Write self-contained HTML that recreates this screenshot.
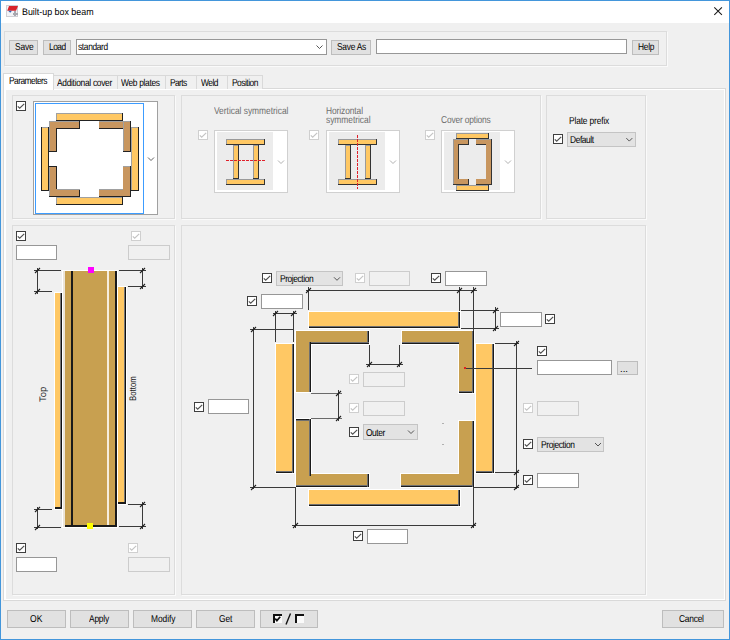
<!DOCTYPE html>
<html><head><meta charset="utf-8"><style>
html,body{margin:0;padding:0;width:730px;height:640px;overflow:hidden;background:#f0f0f0}
body{position:relative;font-family:"Liberation Sans",sans-serif}
#root>div{position:absolute;box-sizing:border-box}
.t{position:absolute;text-rendering:geometricPrecision}
svg.ov{position:absolute;left:0;top:0}
</style></head><body><div id="root">
<div style="left:0px;top:0px;width:730px;height:640px;background:#f0f0f0"></div>
<div style="left:1px;top:1px;width:728px;height:22px;background:#fff"></div>
<div style="left:0px;top:0px;width:730px;height:1px;background:#4396db"></div>
<div style="left:0px;top:639px;width:730px;height:1px;background:#4396db"></div>
<div style="left:0px;top:0px;width:1px;height:640px;background:#4396db"></div>
<div style="left:729px;top:0px;width:1px;height:640px;background:#4396db"></div>
<div class="t" style="left:22.20px;top:8.28px;font-size:9.5px;line-height:9.5px;color:#000;letter-spacing:0.000px;transform:scaleX(0.935);transform-origin:0 0;white-space:pre">Built-up box beam</div>
<div style="left:4px;top:31px;width:663px;height:35px;border:1px solid #dcdcdc;box-shadow:1px 1px 0 #fafafa"></div>
<div style="left:9px;top:40px;width:29px;height:15px;border:1px solid #bdbdbd;background:#e1e1e1"></div>
<div class="t" style="left:14.60px;top:43.20px;font-size:10px;line-height:10px;color:#000;letter-spacing:-0.219px;transform:scaleX(0.840);transform-origin:0 0;white-space:pre">Save</div>
<div style="left:43px;top:40px;width:28px;height:15px;border:1px solid #bdbdbd;background:#e1e1e1"></div>
<div class="t" style="left:48.80px;top:43.20px;font-size:10px;line-height:10px;color:#000;letter-spacing:-0.614px;transform:scaleX(0.840);transform-origin:0 0;white-space:pre">Load</div>
<div style="left:76px;top:39px;width:251px;height:16px;border:1px solid #979797;background:#fff"></div>
<div class="t" style="left:77.50px;top:43.00px;font-size:10px;line-height:10px;color:#000;letter-spacing:-0.421px;transform:scaleX(0.840);transform-origin:0 0;white-space:pre">standard</div>
<div style="left:331px;top:40px;width:40px;height:15px;border:1px solid #bdbdbd;background:#e1e1e1"></div>
<div class="t" style="left:336.70px;top:43.20px;font-size:10px;line-height:10px;color:#000;letter-spacing:-0.303px;transform:scaleX(0.840);transform-origin:0 0;white-space:pre">Save As</div>
<div style="left:376px;top:39px;width:251px;height:15px;border:1px solid #979797;background:#fff"></div>
<div style="left:632px;top:40px;width:27px;height:15px;border:1px solid #bdbdbd;background:#e1e1e1"></div>
<div class="t" style="left:637.80px;top:43.20px;font-size:10px;line-height:10px;color:#000;letter-spacing:-0.319px;transform:scaleX(0.840);transform-origin:0 0;white-space:pre">Help</div>
<div style="left:3px;top:88px;width:723px;height:513px;border:1px solid #d9d9d9;background:#fff"></div>
<div style="left:6px;top:90px;width:718px;height:509px;background:#f0f0f0"></div>
<div style="left:53px;top:75px;width:65px;height:14px;border:1px solid #d9d9d9;border-bottom:none;background:#f0f0f0"></div>
<div class="t" style="left:57.00px;top:79.00px;font-size:10px;line-height:10px;color:#000;letter-spacing:-0.359px;transform:scaleX(0.840);transform-origin:0 0;white-space:pre">Additional cover</div>
<div style="left:117px;top:75px;width:49px;height:14px;border:1px solid #d9d9d9;border-bottom:none;background:#f0f0f0"></div>
<div class="t" style="left:121.40px;top:79.00px;font-size:10px;line-height:10px;color:#000;letter-spacing:-0.375px;transform:scaleX(0.840);transform-origin:0 0;white-space:pre">Web plates</div>
<div style="left:165px;top:75px;width:32px;height:14px;border:1px solid #d9d9d9;border-bottom:none;background:#f0f0f0"></div>
<div class="t" style="left:169.60px;top:79.00px;font-size:10px;line-height:10px;color:#000;letter-spacing:-0.736px;transform:scaleX(0.840);transform-origin:0 0;white-space:pre">Parts</div>
<div style="left:196px;top:75px;width:32px;height:14px;border:1px solid #d9d9d9;border-bottom:none;background:#f0f0f0"></div>
<div class="t" style="left:201.00px;top:79.00px;font-size:10px;line-height:10px;color:#000;letter-spacing:-0.589px;transform:scaleX(0.840);transform-origin:0 0;white-space:pre">Weld</div>
<div style="left:227px;top:75px;width:36px;height:14px;border:1px solid #d9d9d9;border-bottom:none;background:#f0f0f0"></div>
<div class="t" style="left:231.60px;top:79.00px;font-size:10px;line-height:10px;color:#000;letter-spacing:-0.596px;transform:scaleX(0.840);transform-origin:0 0;white-space:pre">Position</div>
<div style="left:3px;top:73px;width:51px;height:17px;border:1px solid #d9d9d9;border-bottom:none;background:#fff"></div>
<div class="t" style="left:8.80px;top:77.30px;font-size:10px;line-height:10px;color:#000;letter-spacing:-0.652px;transform:scaleX(0.840);transform-origin:0 0;white-space:pre">Parameters</div>
<div style="left:12px;top:95px;width:163px;height:124px;border:1px solid #dcdcdc;box-shadow:1px 1px 0 #fafafa"></div>
<div style="left:181px;top:95px;width:360px;height:124px;border:1px solid #dcdcdc;box-shadow:1px 1px 0 #fafafa"></div>
<div style="left:546px;top:95px;width:100px;height:124px;border:1px solid #dcdcdc;box-shadow:1px 1px 0 #fafafa"></div>
<div style="left:12px;top:225px;width:163px;height:370px;border:1px solid #dcdcdc;box-shadow:1px 1px 0 #fafafa"></div>
<div style="left:181px;top:225px;width:465px;height:370px;border:1px solid #dcdcdc;box-shadow:1px 1px 0 #fafafa"></div>
<div style="left:16px;top:101px;width:10px;height:10px;border:1px solid #3f3f3f;background:#fff"><svg width="8" height="8" style="position:absolute;left:0;top:0"><path d="M0.8 4.3 L2.7 6.2 L7.2 1.9" fill="none" stroke="#505050" stroke-width="1.2"/></svg></div>
<div style="left:33px;top:101px;width:125px;height:114px;border:1px solid #a0a0a0;background:#fff"></div>
<div style="left:35px;top:103px;width:109px;height:111px;border:1px solid #3c9cff;background:#fff"></div>
<div class="t" style="left:213.90px;top:107.10px;font-size:10px;line-height:10px;color:#6d6d6d;letter-spacing:-0.017px;transform:scaleX(0.840);transform-origin:0 0;white-space:pre">Vertical symmetrical</div>
<div class="t" style="left:325.70px;top:106.70px;font-size:10px;line-height:10px;color:#6d6d6d;letter-spacing:-0.106px;transform:scaleX(0.840);transform-origin:0 0;white-space:pre">Horizontal</div>
<div class="t" style="left:325.70px;top:116.00px;font-size:10px;line-height:10px;color:#6d6d6d;letter-spacing:-0.032px;transform:scaleX(0.840);transform-origin:0 0;white-space:pre">symmetrical</div>
<div class="t" style="left:440.50px;top:115.70px;font-size:10px;line-height:10px;color:#6d6d6d;letter-spacing:-0.201px;transform:scaleX(0.840);transform-origin:0 0;white-space:pre">Cover options</div>
<div style="left:198px;top:130px;width:10px;height:10px;border:1px solid #cfcfcf;background:#fff"><svg width="8" height="8" style="position:absolute;left:0;top:0"><path d="M0.8 4.3 L2.7 6.2 L7.2 1.9" fill="none" stroke="#c4c4c4" stroke-width="1.2"/></svg></div>
<div style="left:309px;top:130px;width:10px;height:10px;border:1px solid #cfcfcf;background:#fff"><svg width="8" height="8" style="position:absolute;left:0;top:0"><path d="M0.8 4.3 L2.7 6.2 L7.2 1.9" fill="none" stroke="#c4c4c4" stroke-width="1.2"/></svg></div>
<div style="left:425px;top:130px;width:10px;height:10px;border:1px solid #cfcfcf;background:#fff"><svg width="8" height="8" style="position:absolute;left:0;top:0"><path d="M0.8 4.3 L2.7 6.2 L7.2 1.9" fill="none" stroke="#c4c4c4" stroke-width="1.2"/></svg></div>
<div style="left:214px;top:130px;width:74px;height:63px;border:1px solid #d0d0d0;background:#fff"></div>
<div style="left:217px;top:132px;width:56px;height:58px;background:#ececec"></div>
<div style="left:326px;top:130px;width:74px;height:63px;border:1px solid #d0d0d0;background:#fff"></div>
<div style="left:329px;top:132px;width:56px;height:58px;background:#ececec"></div>
<div style="left:441px;top:130px;width:74px;height:63px;border:1px solid #d0d0d0;background:#fff"></div>
<div style="left:444px;top:132px;width:56px;height:58px;background:#ececec"></div>
<div class="t" style="left:568.80px;top:117.20px;font-size:10px;line-height:10px;color:#000;letter-spacing:-0.184px;transform:scaleX(0.840);transform-origin:0 0;white-space:pre">Plate prefix</div>
<div style="left:553px;top:134px;width:10px;height:10px;border:1px solid #3f3f3f;background:#fff"><svg width="8" height="8" style="position:absolute;left:0;top:0"><path d="M0.8 4.3 L2.7 6.2 L7.2 1.9" fill="none" stroke="#505050" stroke-width="1.2"/></svg></div>
<div style="left:567px;top:132px;width:69px;height:15px;border:1px solid #c4c4c4;background:#e3e3e3"></div>
<div class="t" style="left:569.90px;top:136.20px;font-size:10px;line-height:10px;color:#000;letter-spacing:-0.502px;transform:scaleX(0.840);transform-origin:0 0;white-space:pre">Default</div>
<div style="left:16px;top:231px;width:10px;height:10px;border:1px solid #3f3f3f;background:#fff"><svg width="8" height="8" style="position:absolute;left:0;top:0"><path d="M0.8 4.3 L2.7 6.2 L7.2 1.9" fill="none" stroke="#505050" stroke-width="1.2"/></svg></div>
<div style="left:16px;top:245px;width:41px;height:15px;border:1px solid #979797;background:#fff"></div>
<div style="left:131px;top:231px;width:10px;height:10px;border:1px solid #cfcfcf;background:#fff"><svg width="8" height="8" style="position:absolute;left:0;top:0"><path d="M0.8 4.3 L2.7 6.2 L7.2 1.9" fill="none" stroke="#c4c4c4" stroke-width="1.2"/></svg></div>
<div style="left:128px;top:245px;width:42px;height:15px;border:1px solid #cccccc;background:#f0f0f0"></div>
<div style="left:16px;top:543px;width:10px;height:10px;border:1px solid #3f3f3f;background:#fff"><svg width="8" height="8" style="position:absolute;left:0;top:0"><path d="M0.8 4.3 L2.7 6.2 L7.2 1.9" fill="none" stroke="#505050" stroke-width="1.2"/></svg></div>
<div style="left:16px;top:557px;width:41px;height:15px;border:1px solid #979797;background:#fff"></div>
<div style="left:128px;top:543px;width:10px;height:10px;border:1px solid #cfcfcf;background:#fff"><svg width="8" height="8" style="position:absolute;left:0;top:0"><path d="M0.8 4.3 L2.7 6.2 L7.2 1.9" fill="none" stroke="#c4c4c4" stroke-width="1.2"/></svg></div>
<div style="left:128px;top:557px;width:42px;height:15px;border:1px solid #cccccc;background:#f0f0f0"></div>
<div class="t" style="left:38.68px;top:401.90px;font-size:9.5px;line-height:9.5px;color:#222;transform:rotate(-90deg) scaleX(0.994);transform-origin:0 0;white-space:pre">Top</div>
<div class="t" style="left:129.38px;top:400.60px;font-size:9.5px;line-height:9.5px;color:#222;transform:rotate(-90deg) scaleX(0.827);transform-origin:0 0;white-space:pre">Bottom</div>
<div style="left:262px;top:273px;width:10px;height:10px;border:1px solid #3f3f3f;background:#fff"><svg width="8" height="8" style="position:absolute;left:0;top:0"><path d="M0.8 4.3 L2.7 6.2 L7.2 1.9" fill="none" stroke="#505050" stroke-width="1.2"/></svg></div>
<div style="left:276px;top:271px;width:67px;height:15px;border:1px solid #c4c4c4;background:#e3e3e3"></div>
<div class="t" style="left:279.70px;top:275.20px;font-size:10px;line-height:10px;color:#000;letter-spacing:-0.487px;transform:scaleX(0.840);transform-origin:0 0;white-space:pre">Projection</div>
<div style="left:355px;top:273px;width:10px;height:10px;border:1px solid #cfcfcf;background:#fff"><svg width="8" height="8" style="position:absolute;left:0;top:0"><path d="M0.8 4.3 L2.7 6.2 L7.2 1.9" fill="none" stroke="#c4c4c4" stroke-width="1.2"/></svg></div>
<div style="left:369px;top:271px;width:41px;height:15px;border:1px solid #cccccc;background:#f0f0f0"></div>
<div style="left:431px;top:273px;width:10px;height:10px;border:1px solid #3f3f3f;background:#fff"><svg width="8" height="8" style="position:absolute;left:0;top:0"><path d="M0.8 4.3 L2.7 6.2 L7.2 1.9" fill="none" stroke="#505050" stroke-width="1.2"/></svg></div>
<div style="left:445px;top:271px;width:42px;height:15px;border:1px solid #979797;background:#fff"></div>
<div style="left:247px;top:296px;width:10px;height:10px;border:1px solid #3f3f3f;background:#fff"><svg width="8" height="8" style="position:absolute;left:0;top:0"><path d="M0.8 4.3 L2.7 6.2 L7.2 1.9" fill="none" stroke="#505050" stroke-width="1.2"/></svg></div>
<div style="left:261px;top:294px;width:42px;height:15px;border:1px solid #979797;background:#fff"></div>
<div style="left:500px;top:312px;width:42px;height:15px;border:1px solid #979797;background:#fff"></div>
<div style="left:545px;top:314px;width:10px;height:10px;border:1px solid #3f3f3f;background:#fff"><svg width="8" height="8" style="position:absolute;left:0;top:0"><path d="M0.8 4.3 L2.7 6.2 L7.2 1.9" fill="none" stroke="#505050" stroke-width="1.2"/></svg></div>
<div style="left:537px;top:346px;width:10px;height:10px;border:1px solid #3f3f3f;background:#fff"><svg width="8" height="8" style="position:absolute;left:0;top:0"><path d="M0.8 4.3 L2.7 6.2 L7.2 1.9" fill="none" stroke="#505050" stroke-width="1.2"/></svg></div>
<div style="left:537px;top:360px;width:75px;height:15px;border:1px solid #979797;background:#fff"></div>
<div style="left:617px;top:361px;width:21px;height:14px;border:1px solid #bdbdbd;background:#e1e1e1"></div>
<div class="t" style="left:620.00px;top:364.70px;font-size:10px;line-height:10px;color:#000;letter-spacing:0.000px;transform:scaleX(0.964);transform-origin:0 0;white-space:pre">...</div>
<div style="left:349px;top:374px;width:10px;height:10px;border:1px solid #cfcfcf;background:#fff"><svg width="8" height="8" style="position:absolute;left:0;top:0"><path d="M0.8 4.3 L2.7 6.2 L7.2 1.9" fill="none" stroke="#c4c4c4" stroke-width="1.2"/></svg></div>
<div style="left:363px;top:372px;width:42px;height:15px;border:1px solid #cccccc;background:#f0f0f0"></div>
<div style="left:349px;top:403px;width:10px;height:10px;border:1px solid #cfcfcf;background:#fff"><svg width="8" height="8" style="position:absolute;left:0;top:0"><path d="M0.8 4.3 L2.7 6.2 L7.2 1.9" fill="none" stroke="#c4c4c4" stroke-width="1.2"/></svg></div>
<div style="left:363px;top:401px;width:42px;height:15px;border:1px solid #cccccc;background:#f0f0f0"></div>
<div style="left:349px;top:427px;width:10px;height:10px;border:1px solid #3f3f3f;background:#fff"><svg width="8" height="8" style="position:absolute;left:0;top:0"><path d="M0.8 4.3 L2.7 6.2 L7.2 1.9" fill="none" stroke="#505050" stroke-width="1.2"/></svg></div>
<div style="left:363px;top:424px;width:55px;height:16px;border:1px solid #c4c4c4;background:#e3e3e3"></div>
<div class="t" style="left:365.80px;top:428.60px;font-size:10px;line-height:10px;color:#000;letter-spacing:-0.536px;transform:scaleX(0.840);transform-origin:0 0;white-space:pre">Outer</div>
<div style="left:194px;top:402px;width:10px;height:10px;border:1px solid #3f3f3f;background:#fff"><svg width="8" height="8" style="position:absolute;left:0;top:0"><path d="M0.8 4.3 L2.7 6.2 L7.2 1.9" fill="none" stroke="#505050" stroke-width="1.2"/></svg></div>
<div style="left:208px;top:399px;width:41px;height:15px;border:1px solid #979797;background:#fff"></div>
<div style="left:523px;top:403px;width:10px;height:10px;border:1px solid #cfcfcf;background:#fff"><svg width="8" height="8" style="position:absolute;left:0;top:0"><path d="M0.8 4.3 L2.7 6.2 L7.2 1.9" fill="none" stroke="#c4c4c4" stroke-width="1.2"/></svg></div>
<div style="left:537px;top:401px;width:42px;height:15px;border:1px solid #cccccc;background:#f0f0f0"></div>
<div style="left:523px;top:439px;width:10px;height:10px;border:1px solid #3f3f3f;background:#fff"><svg width="8" height="8" style="position:absolute;left:0;top:0"><path d="M0.8 4.3 L2.7 6.2 L7.2 1.9" fill="none" stroke="#505050" stroke-width="1.2"/></svg></div>
<div style="left:537px;top:437px;width:67px;height:15px;border:1px solid #c4c4c4;background:#e3e3e3"></div>
<div class="t" style="left:540.50px;top:441.20px;font-size:10px;line-height:10px;color:#000;letter-spacing:-0.447px;transform:scaleX(0.840);transform-origin:0 0;white-space:pre">Projection</div>
<div style="left:523px;top:475px;width:10px;height:10px;border:1px solid #3f3f3f;background:#fff"><svg width="8" height="8" style="position:absolute;left:0;top:0"><path d="M0.8 4.3 L2.7 6.2 L7.2 1.9" fill="none" stroke="#505050" stroke-width="1.2"/></svg></div>
<div style="left:537px;top:473px;width:42px;height:15px;border:1px solid #979797;background:#fff"></div>
<div style="left:353px;top:531px;width:10px;height:10px;border:1px solid #3f3f3f;background:#fff"><svg width="8" height="8" style="position:absolute;left:0;top:0"><path d="M0.8 4.3 L2.7 6.2 L7.2 1.9" fill="none" stroke="#505050" stroke-width="1.2"/></svg></div>
<div style="left:367px;top:529px;width:41px;height:15px;border:1px solid #979797;background:#fff"></div>
<div style="left:7px;top:610px;width:59px;height:18px;border:1px solid #bdbdbd;background:#e1e1e1"></div>
<div class="t" style="left:30.00px;top:615.20px;font-size:10px;line-height:10px;color:#000;letter-spacing:0.000px;transform:scaleX(0.854);transform-origin:0 0;white-space:pre">OK</div>
<div style="left:70px;top:610px;width:59px;height:18px;border:1px solid #bdbdbd;background:#e1e1e1"></div>
<div class="t" style="left:88.80px;top:615.20px;font-size:10px;line-height:10px;color:#000;letter-spacing:-0.268px;transform:scaleX(0.840);transform-origin:0 0;white-space:pre">Apply</div>
<div style="left:133px;top:610px;width:59px;height:18px;border:1px solid #bdbdbd;background:#e1e1e1"></div>
<div class="t" style="left:150.50px;top:615.20px;font-size:10px;line-height:10px;color:#000;letter-spacing:-0.067px;transform:scaleX(0.840);transform-origin:0 0;white-space:pre">Modify</div>
<div style="left:196px;top:610px;width:59px;height:18px;border:1px solid #bdbdbd;background:#e1e1e1"></div>
<div class="t" style="left:219.00px;top:615.20px;font-size:10px;line-height:10px;color:#000;letter-spacing:-0.074px;transform:scaleX(0.840);transform-origin:0 0;white-space:pre">Get</div>
<div style="left:260px;top:610px;width:58px;height:18px;border:1px solid #bdbdbd;background:#e1e1e1"></div>
<div style="left:662px;top:610px;width:62px;height:18px;border:1px solid #bdbdbd;background:#e1e1e1"></div>
<div class="t" style="left:679.20px;top:615.10px;font-size:10px;line-height:10px;color:#000;letter-spacing:-0.291px;transform:scaleX(0.840);transform-origin:0 0;white-space:pre">Cancel</div>
</div>
<svg class="ov" width="730" height="640" viewBox="0 0 730 640" shape-rendering="crispEdges">
<rect x="6.5" y="5.5" width="11" height="11" fill="#f2f3f7" stroke="#cfcfd4" stroke-width="1"/>
<path d="M9 6 L18 6 L16 10.8 L7.2 10.8 Z" fill="#d8232a" shape-rendering="geometricPrecision"/>
<path d="M8.2 10.8 L12 10.8 L10.2 12.8 Z" fill="#2f66b8" shape-rendering="geometricPrecision"/>
<rect x="12.5" y="13" width="5" height="1.5" fill="#a8a8b0"/><rect x="14" y="11.3" width="1.5" height="4.7" fill="#a8a8b0"/>
<path d="M714.3 7.3 L721.9 14.9 M721.9 7.3 L714.3 14.9" stroke="#1a1a1a" stroke-width="1.05" shape-rendering="geometricPrecision"/>
<path d="M316.5 45.5 L319.5 48.5 L322.5 45.5" fill="none" stroke="#444" stroke-width="0.9" shape-rendering="geometricPrecision"/>
<path d="M148 157.5 L151 160.5 L154 157.5" fill="none" stroke="#505050" stroke-width="0.9" shape-rendering="geometricPrecision"/>
<rect x="56" y="113" width="67" height="8" fill="#ffc864"/>
<rect x="56" y="113" width="67" height="1" fill="#a0a0a0"/>
<rect x="56" y="113" width="1" height="8" fill="#a0a0a0"/>
<rect x="56" y="120" width="67" height="1" fill="#222"/>
<rect x="122" y="113" width="1" height="8" fill="#222"/>
<rect x="56" y="197" width="67" height="8" fill="#ffc864"/>
<rect x="56" y="197" width="67" height="1" fill="#a0a0a0"/>
<rect x="56" y="197" width="1" height="8" fill="#a0a0a0"/>
<rect x="56" y="204" width="67" height="1" fill="#222"/>
<rect x="122" y="197" width="1" height="8" fill="#222"/>
<rect x="41" y="127" width="8" height="64" fill="#ffc864"/>
<rect x="41" y="127" width="8" height="1" fill="#a0a0a0"/>
<rect x="41" y="127" width="1" height="64" fill="#a0a0a0"/>
<rect x="41" y="190" width="8" height="1" fill="#222"/>
<rect x="48" y="127" width="1" height="64" fill="#222"/>
<rect x="41" y="127" width="1" height="64" fill="#222"/>
<rect x="131" y="127" width="8" height="64" fill="#ffc864"/>
<rect x="131" y="127" width="8" height="1" fill="#a0a0a0"/>
<rect x="131" y="127" width="1" height="64" fill="#a0a0a0"/>
<rect x="131" y="190" width="8" height="1" fill="#222"/>
<rect x="138" y="127" width="1" height="64" fill="#222"/>
<rect x="49" y="121" width="31" height="8" fill="#c8965f"/>
<rect x="49" y="121" width="8" height="31" fill="#c8965f"/>
<rect x="49" y="121" width="31" height="1" fill="#a0a0a0"/>
<rect x="49" y="121" width="1" height="31" fill="#a0a0a0"/>
<rect x="56" y="128" width="24" height="1" fill="#222"/>
<rect x="56" y="128" width="1" height="24" fill="#222"/>
<rect x="79" y="121" width="1" height="8" fill="#222"/>
<rect x="49" y="151" width="8" height="1" fill="#222"/>
<rect x="99" y="121" width="32" height="8" fill="#c8965f"/>
<rect x="123" y="121" width="8" height="31" fill="#c8965f"/>
<rect x="99" y="121" width="32" height="1" fill="#a0a0a0"/>
<rect x="123" y="121" width="1" height="31" fill="#a0a0a0"/>
<rect x="99" y="128" width="24" height="1" fill="#222"/>
<rect x="130" y="121" width="1" height="31" fill="#222"/>
<rect x="123" y="151" width="8" height="1" fill="#222"/>
<rect x="49" y="189" width="31" height="8" fill="#c8965f"/>
<rect x="49" y="166" width="8" height="31" fill="#c8965f"/>
<rect x="49" y="166" width="1" height="31" fill="#a0a0a0"/>
<rect x="49" y="166" width="8" height="1" fill="#222"/>
<rect x="56" y="166" width="1" height="23" fill="#222"/>
<rect x="49" y="196" width="31" height="1" fill="#222"/>
<rect x="79" y="189" width="1" height="8" fill="#222"/>
<rect x="57" y="189" width="23" height="1" fill="#a0a0a0"/>
<rect x="99" y="189" width="32" height="8" fill="#c8965f"/>
<rect x="123" y="166" width="8" height="31" fill="#c8965f"/>
<rect x="123" y="166" width="8" height="1" fill="#a0a0a0"/>
<rect x="99" y="189" width="24" height="1" fill="#a0a0a0"/>
<rect x="130" y="166" width="1" height="31" fill="#222"/>
<rect x="99" y="196" width="32" height="1" fill="#222"/>
<path d="M278 160.5 L281 163.5 L284 160.5" fill="none" stroke="#a8a8a8" stroke-width="0.9" shape-rendering="geometricPrecision"/>
<path d="M390 160.5 L393 163.5 L396 160.5" fill="none" stroke="#a8a8a8" stroke-width="0.9" shape-rendering="geometricPrecision"/>
<path d="M505 160.5 L508 163.5 L511 160.5" fill="none" stroke="#a8a8a8" stroke-width="0.9" shape-rendering="geometricPrecision"/>
<rect x="226" y="139" width="39" height="6" fill="#ffc864"/>
<rect x="226" y="139" width="39" height="1" fill="#9a9a9a"/>
<rect x="226" y="139" width="1" height="6" fill="#9a9a9a"/>
<rect x="226" y="144" width="39" height="1" fill="#333"/>
<rect x="264" y="139" width="1" height="6" fill="#333"/>
<rect x="226" y="179" width="39" height="6" fill="#ffc864"/>
<rect x="226" y="179" width="39" height="1" fill="#9a9a9a"/>
<rect x="226" y="179" width="1" height="6" fill="#9a9a9a"/>
<rect x="226" y="184" width="39" height="1" fill="#333"/>
<rect x="264" y="179" width="1" height="6" fill="#333"/>
<rect x="233" y="145" width="6" height="34" fill="#ffc864"/>
<rect x="233" y="145" width="6" height="1" fill="#9a9a9a"/>
<rect x="233" y="145" width="1" height="34" fill="#9a9a9a"/>
<rect x="233" y="178" width="6" height="1" fill="#333"/>
<rect x="238" y="145" width="1" height="34" fill="#333"/>
<rect x="253" y="145" width="6" height="34" fill="#ffc864"/>
<rect x="253" y="145" width="6" height="1" fill="#9a9a9a"/>
<rect x="253" y="145" width="1" height="34" fill="#9a9a9a"/>
<rect x="253" y="178" width="6" height="1" fill="#333"/>
<rect x="258" y="145" width="1" height="34" fill="#333"/>
<rect x="338" y="139" width="39" height="6" fill="#ffc864"/>
<rect x="338" y="139" width="39" height="1" fill="#9a9a9a"/>
<rect x="338" y="139" width="1" height="6" fill="#9a9a9a"/>
<rect x="338" y="144" width="39" height="1" fill="#333"/>
<rect x="376" y="139" width="1" height="6" fill="#333"/>
<rect x="338" y="179" width="39" height="6" fill="#ffc864"/>
<rect x="338" y="179" width="39" height="1" fill="#9a9a9a"/>
<rect x="338" y="179" width="1" height="6" fill="#9a9a9a"/>
<rect x="338" y="184" width="39" height="1" fill="#333"/>
<rect x="376" y="179" width="1" height="6" fill="#333"/>
<rect x="345" y="145" width="6" height="34" fill="#ffc864"/>
<rect x="345" y="145" width="6" height="1" fill="#9a9a9a"/>
<rect x="345" y="145" width="1" height="34" fill="#9a9a9a"/>
<rect x="345" y="178" width="6" height="1" fill="#333"/>
<rect x="350" y="145" width="1" height="34" fill="#333"/>
<rect x="365" y="145" width="6" height="34" fill="#ffc864"/>
<rect x="365" y="145" width="6" height="1" fill="#9a9a9a"/>
<rect x="365" y="145" width="1" height="34" fill="#9a9a9a"/>
<rect x="365" y="178" width="6" height="1" fill="#333"/>
<rect x="370" y="145" width="1" height="34" fill="#333"/>
<line x1="226" y1="160.5" x2="266" y2="160.5" stroke="#e0202a" stroke-width="1" stroke-dasharray="2.5,1.5"/>
<line x1="357.5" y1="135" x2="357.5" y2="189" stroke="#e0202a" stroke-width="1" stroke-dasharray="2.5,1.5"/>
<rect x="456" y="133" width="33" height="6" fill="#ffc864"/>
<rect x="456" y="133" width="33" height="1" fill="#9a9a9a"/>
<rect x="456" y="133" width="1" height="6" fill="#9a9a9a"/>
<rect x="456" y="138" width="33" height="1" fill="#333"/>
<rect x="488" y="133" width="1" height="6" fill="#333"/>
<rect x="456" y="185" width="33" height="6" fill="#ffc864"/>
<rect x="456" y="185" width="33" height="1" fill="#9a9a9a"/>
<rect x="456" y="185" width="1" height="6" fill="#9a9a9a"/>
<rect x="456" y="190" width="33" height="1" fill="#333"/>
<rect x="488" y="185" width="1" height="6" fill="#333"/>
<rect x="453" y="139" width="16" height="6" fill="#c8965f"/>
<rect x="453" y="139" width="6" height="46" fill="#c8965f"/>
<rect x="453" y="179" width="16" height="6" fill="#c8965f"/>
<rect x="453" y="139" width="16" height="1" fill="#9a9a9a"/>
<rect x="453" y="139" width="1" height="46" fill="#9a9a9a"/>
<rect x="468" y="139" width="1" height="6" fill="#333"/>
<rect x="458" y="144" width="11" height="1" fill="#333"/>
<rect x="458" y="145" width="1" height="34" fill="#333"/>
<rect x="453" y="184" width="16" height="1" fill="#333"/>
<rect x="468" y="179" width="1" height="6" fill="#333"/>
<rect x="476" y="139" width="16" height="6" fill="#c8965f"/>
<rect x="486" y="139" width="6" height="46" fill="#c8965f"/>
<rect x="476" y="179" width="16" height="6" fill="#c8965f"/>
<rect x="476" y="139" width="16" height="1" fill="#9a9a9a"/>
<rect x="491" y="139" width="1" height="46" fill="#333"/>
<rect x="476" y="144" width="10" height="1" fill="#333"/>
<rect x="476" y="184" width="16" height="1" fill="#333"/>
<path d="M626.3 138.1 L629.3 141.1 L632.3 138.1" fill="none" stroke="#444" stroke-width="0.9" shape-rendering="geometricPrecision"/>
<rect x="62" y="270" width="56" height="258" fill="#ffffff"/>
<rect x="63" y="271" width="2" height="256" fill="#ece5d8"/>
<rect x="65" y="271" width="52" height="256" fill="#c8a050"/>
<rect x="71" y="271" width="2" height="256" fill="#1a1a1a"/>
<rect x="107" y="271" width="2" height="256" fill="#f7eedf"/>
<rect x="115" y="271" width="2" height="256" fill="#1a1a1a"/>
<rect x="65" y="525" width="52" height="2" fill="#1a1a1a"/>
<rect x="54" y="292" width="8" height="218" fill="#ffffff"/>
<rect x="55" y="293" width="5" height="214" fill="#ffc864"/>
<rect x="60" y="293" width="1" height="216" fill="#777"/>
<rect x="61" y="293" width="1" height="216" fill="#111"/>
<rect x="55" y="507" width="7" height="2" fill="#1a1a1a"/>
<rect x="117" y="286" width="10" height="219" fill="#ffffff"/>
<rect x="118" y="287" width="6" height="215" fill="#ffc864"/>
<rect x="124" y="287" width="1" height="217" fill="#777"/>
<rect x="125" y="287" width="1" height="217" fill="#111"/>
<rect x="118" y="502" width="8" height="2" fill="#1a1a1a"/>
<rect x="88" y="267" width="6" height="6" fill="#ff00ff"/>
<rect x="87" y="523" width="6" height="6" fill="#ffff00"/>
<line x1="34" y1="270.5" x2="61" y2="270.5" stroke="#3a3a3a" stroke-width="1"/>
<line x1="37.5" y1="268" x2="37.5" y2="294" stroke="#3a3a3a" stroke-width="1"/>
<line x1="34" y1="291.5" x2="52" y2="291.5" stroke="#3a3a3a" stroke-width="1"/>
<line x1="35" y1="273" x2="40" y2="268" stroke="#222" stroke-width="1.1" shape-rendering="geometricPrecision"/>
<line x1="35" y1="294" x2="40" y2="289" stroke="#222" stroke-width="1.1" shape-rendering="geometricPrecision"/>
<line x1="34" y1="509.5" x2="52" y2="509.5" stroke="#3a3a3a" stroke-width="1"/>
<line x1="37.5" y1="507" x2="37.5" y2="529" stroke="#3a3a3a" stroke-width="1"/>
<line x1="34" y1="527.5" x2="61" y2="527.5" stroke="#3a3a3a" stroke-width="1"/>
<line x1="35" y1="512" x2="40" y2="507" stroke="#222" stroke-width="1.1" shape-rendering="geometricPrecision"/>
<line x1="35" y1="530" x2="40" y2="525" stroke="#222" stroke-width="1.1" shape-rendering="geometricPrecision"/>
<line x1="119" y1="270.5" x2="146" y2="270.5" stroke="#3a3a3a" stroke-width="1"/>
<line x1="142.5" y1="268" x2="142.5" y2="289" stroke="#3a3a3a" stroke-width="1"/>
<line x1="128" y1="286.5" x2="146" y2="286.5" stroke="#3a3a3a" stroke-width="1"/>
<line x1="140" y1="273" x2="145" y2="268" stroke="#222" stroke-width="1.1" shape-rendering="geometricPrecision"/>
<line x1="140" y1="289" x2="145" y2="284" stroke="#222" stroke-width="1.1" shape-rendering="geometricPrecision"/>
<line x1="128" y1="504.5" x2="146" y2="504.5" stroke="#3a3a3a" stroke-width="1"/>
<line x1="142.5" y1="502" x2="142.5" y2="529" stroke="#3a3a3a" stroke-width="1"/>
<line x1="119" y1="526.5" x2="146" y2="526.5" stroke="#3a3a3a" stroke-width="1"/>
<line x1="140" y1="507" x2="145" y2="502" stroke="#222" stroke-width="1.1" shape-rendering="geometricPrecision"/>
<line x1="140" y1="529" x2="145" y2="524" stroke="#222" stroke-width="1.1" shape-rendering="geometricPrecision"/>
<path d="M334 277.3 L337 280.3 L340 277.3" fill="none" stroke="#444" stroke-width="0.9" shape-rendering="geometricPrecision"/>
<path d="M408 430.5 L411 433.5 L414 430.5" fill="none" stroke="#444" stroke-width="0.9" shape-rendering="geometricPrecision"/>
<path d="M595 443.0 L598 446.0 L601 443.0" fill="none" stroke="#444" stroke-width="0.9" shape-rendering="geometricPrecision"/>
<rect x="308" y="311" width="153" height="18" fill="#ffffff"/>
<rect x="309" y="312" width="151" height="16" fill="#ffc864"/>
<rect x="309" y="326" width="151" height="2" fill="#1a1a1a"/>
<rect x="309" y="326" width="151" height="1" fill="#707070"/>
<rect x="458" y="312" width="2" height="16" fill="#1a1a1a"/>
<rect x="458" y="312" width="1" height="16" fill="#707070"/>
<rect x="308" y="489" width="153" height="18" fill="#ffffff"/>
<rect x="309" y="490" width="151" height="16" fill="#ffc864"/>
<rect x="309" y="504" width="151" height="2" fill="#1a1a1a"/>
<rect x="309" y="504" width="151" height="1" fill="#707070"/>
<rect x="458" y="490" width="2" height="16" fill="#1a1a1a"/>
<rect x="458" y="490" width="1" height="16" fill="#707070"/>
<rect x="275" y="343" width="20" height="131" fill="#ffffff"/>
<rect x="276" y="344" width="18" height="129" fill="#ffc864"/>
<rect x="276" y="471" width="18" height="2" fill="#1a1a1a"/>
<rect x="276" y="471" width="18" height="1" fill="#707070"/>
<rect x="292" y="344" width="2" height="129" fill="#1a1a1a"/>
<rect x="292" y="344" width="1" height="129" fill="#707070"/>
<rect x="475" y="343" width="20" height="131" fill="#ffffff"/>
<rect x="476" y="344" width="18" height="129" fill="#ffc864"/>
<rect x="476" y="471" width="18" height="2" fill="#1a1a1a"/>
<rect x="476" y="471" width="18" height="1" fill="#707070"/>
<rect x="492" y="344" width="2" height="129" fill="#1a1a1a"/>
<rect x="492" y="344" width="1" height="129" fill="#707070"/>
<rect x="295" y="330" width="75" height="15" fill="#ffffff"/>
<rect x="295" y="330" width="17" height="63" fill="#ffffff"/>
<rect x="296" y="331" width="73" height="13" fill="#c8a050"/>
<rect x="296" y="331" width="15" height="61" fill="#c8a050"/>
<rect x="367" y="331" width="2" height="13" fill="#1a1a1a"/>
<rect x="367" y="331" width="1" height="13" fill="#707070"/>
<rect x="309" y="342" width="60" height="2" fill="#1a1a1a"/>
<rect x="309" y="342" width="60" height="1" fill="#707070"/>
<rect x="309" y="342" width="2" height="50" fill="#1a1a1a"/>
<rect x="309" y="342" width="1" height="50" fill="#707070"/>
<rect x="401" y="330" width="74" height="15" fill="#ffffff"/>
<rect x="458" y="330" width="17" height="64" fill="#ffffff"/>
<rect x="402" y="331" width="72" height="13" fill="#c8a050"/>
<rect x="459" y="331" width="15" height="62" fill="#c8a050"/>
<rect x="402" y="342" width="57" height="2" fill="#1a1a1a"/>
<rect x="402" y="342" width="57" height="1" fill="#707070"/>
<rect x="459" y="391" width="15" height="2" fill="#1a1a1a"/>
<rect x="459" y="391" width="15" height="1" fill="#707070"/>
<rect x="472" y="331" width="2" height="62" fill="#1a1a1a"/>
<rect x="472" y="331" width="1" height="62" fill="#707070"/>
<rect x="295" y="418" width="17" height="70" fill="#ffffff"/>
<rect x="295" y="473" width="75" height="15" fill="#ffffff"/>
<rect x="296" y="419" width="15" height="68" fill="#c8a050"/>
<rect x="296" y="474" width="73" height="13" fill="#c8a050"/>
<rect x="296" y="419" width="15" height="2" fill="#1a1a1a"/>
<rect x="296" y="420" width="15" height="1" fill="#707070"/>
<rect x="309" y="419" width="2" height="57" fill="#1a1a1a"/>
<rect x="309" y="419" width="1" height="57" fill="#707070"/>
<rect x="296" y="485" width="73" height="2" fill="#1a1a1a"/>
<rect x="296" y="485" width="73" height="1" fill="#707070"/>
<rect x="367" y="474" width="2" height="13" fill="#1a1a1a"/>
<rect x="367" y="474" width="1" height="13" fill="#707070"/>
<rect x="458" y="420" width="17" height="68" fill="#ffffff"/>
<rect x="400" y="473" width="75" height="15" fill="#ffffff"/>
<rect x="459" y="421" width="15" height="66" fill="#c8a050"/>
<rect x="401" y="474" width="73" height="13" fill="#c8a050"/>
<rect x="401" y="485" width="73" height="2" fill="#1a1a1a"/>
<rect x="401" y="485" width="73" height="1" fill="#707070"/>
<rect x="472" y="421" width="2" height="66" fill="#1a1a1a"/>
<rect x="472" y="421" width="1" height="66" fill="#707070"/>
<rect x="442" y="423" width="2" height="1" fill="#b0b0b0"/>
<rect x="442" y="444" width="2" height="1" fill="#b0b0b0"/>
<line x1="306" y1="290.5" x2="477" y2="290.5" stroke="#3a3a3a" stroke-width="1"/>
<line x1="308.5" y1="287" x2="308.5" y2="310" stroke="#3a3a3a" stroke-width="1"/>
<line x1="459.5" y1="287" x2="459.5" y2="311" stroke="#3a3a3a" stroke-width="1"/>
<line x1="473.5" y1="287" x2="473.5" y2="331" stroke="#3a3a3a" stroke-width="1"/>
<line x1="306" y1="293" x2="311" y2="288" stroke="#222" stroke-width="1.1" shape-rendering="geometricPrecision"/>
<line x1="457" y1="293" x2="462" y2="288" stroke="#222" stroke-width="1.1" shape-rendering="geometricPrecision"/>
<line x1="471" y1="293" x2="476" y2="288" stroke="#222" stroke-width="1.1" shape-rendering="geometricPrecision"/>
<line x1="461" y1="310.5" x2="499" y2="310.5" stroke="#3a3a3a" stroke-width="1"/>
<line x1="461" y1="328.5" x2="499" y2="328.5" stroke="#3a3a3a" stroke-width="1"/>
<line x1="495.5" y1="307" x2="495.5" y2="331" stroke="#3a3a3a" stroke-width="1"/>
<line x1="493" y1="313" x2="498" y2="308" stroke="#222" stroke-width="1.1" shape-rendering="geometricPrecision"/>
<line x1="493" y1="331" x2="498" y2="326" stroke="#222" stroke-width="1.1" shape-rendering="geometricPrecision"/>
<line x1="273" y1="313.5" x2="297" y2="313.5" stroke="#3a3a3a" stroke-width="1"/>
<line x1="275.5" y1="311" x2="275.5" y2="342" stroke="#3a3a3a" stroke-width="1"/>
<line x1="293.5" y1="311" x2="293.5" y2="342" stroke="#3a3a3a" stroke-width="1"/>
<line x1="273" y1="316" x2="278" y2="311" stroke="#222" stroke-width="1.1" shape-rendering="geometricPrecision"/>
<line x1="291" y1="316" x2="296" y2="311" stroke="#222" stroke-width="1.1" shape-rendering="geometricPrecision"/>
<line x1="253.5" y1="327" x2="253.5" y2="489" stroke="#3a3a3a" stroke-width="1"/>
<line x1="250" y1="329.5" x2="294" y2="329.5" stroke="#3a3a3a" stroke-width="1"/>
<line x1="250" y1="487.5" x2="295" y2="487.5" stroke="#3a3a3a" stroke-width="1"/>
<line x1="251" y1="332" x2="256" y2="327" stroke="#222" stroke-width="1.1" shape-rendering="geometricPrecision"/>
<line x1="251" y1="490" x2="256" y2="485" stroke="#222" stroke-width="1.1" shape-rendering="geometricPrecision"/>
<line x1="369.5" y1="345" x2="369.5" y2="367" stroke="#3a3a3a" stroke-width="1"/>
<line x1="399.5" y1="345" x2="399.5" y2="367" stroke="#3a3a3a" stroke-width="1"/>
<line x1="366" y1="364.5" x2="403" y2="364.5" stroke="#3a3a3a" stroke-width="1"/>
<line x1="367" y1="367" x2="372" y2="362" stroke="#222" stroke-width="1.1" shape-rendering="geometricPrecision"/>
<line x1="397" y1="367" x2="402" y2="362" stroke="#222" stroke-width="1.1" shape-rendering="geometricPrecision"/>
<line x1="465" y1="368.5" x2="532" y2="368.5" stroke="#3a3a3a" stroke-width="1"/>
<rect x="464" y="367" width="2" height="2" fill="#e02020"/>
<line x1="516.5" y1="341" x2="516.5" y2="489" stroke="#3a3a3a" stroke-width="1"/>
<line x1="495" y1="343.5" x2="519" y2="343.5" stroke="#3a3a3a" stroke-width="1"/>
<line x1="495" y1="472.5" x2="519" y2="472.5" stroke="#3a3a3a" stroke-width="1"/>
<line x1="474" y1="487.5" x2="519" y2="487.5" stroke="#3a3a3a" stroke-width="1"/>
<line x1="514" y1="346" x2="519" y2="341" stroke="#222" stroke-width="1.1" shape-rendering="geometricPrecision"/>
<line x1="514" y1="475" x2="519" y2="470" stroke="#222" stroke-width="1.1" shape-rendering="geometricPrecision"/>
<line x1="514" y1="490" x2="519" y2="485" stroke="#222" stroke-width="1.1" shape-rendering="geometricPrecision"/>
<line x1="311" y1="393.5" x2="342" y2="393.5" stroke="#6a6a6a" stroke-width="1"/>
<line x1="311" y1="418.5" x2="342" y2="418.5" stroke="#6a6a6a" stroke-width="1"/>
<line x1="338.5" y1="390" x2="338.5" y2="421" stroke="#3a3a3a" stroke-width="1"/>
<line x1="336" y1="396" x2="341" y2="391" stroke="#222" stroke-width="1.1" shape-rendering="geometricPrecision"/>
<line x1="336" y1="421" x2="341" y2="416" stroke="#222" stroke-width="1.1" shape-rendering="geometricPrecision"/>
<line x1="295.5" y1="487" x2="295.5" y2="528" stroke="#3a3a3a" stroke-width="1"/>
<line x1="473.5" y1="487" x2="473.5" y2="528" stroke="#3a3a3a" stroke-width="1"/>
<line x1="292" y1="525.5" x2="476" y2="525.5" stroke="#3a3a3a" stroke-width="1"/>
<line x1="293" y1="528" x2="298" y2="523" stroke="#222" stroke-width="1.1" shape-rendering="geometricPrecision"/>
<line x1="471" y1="528" x2="476" y2="523" stroke="#222" stroke-width="1.1" shape-rendering="geometricPrecision"/>
<path d="M273.7 623 L273.7 614.7 L281.5 614.7" fill="none" stroke="#111" stroke-width="1.8"/>
<rect x="274.5" y="615.5" width="7" height="7" fill="#fafafa"/>
<path d="M275.2 618.6 L276.9 620.6 L280.2 616.8" fill="none" stroke="#111" stroke-width="1.7" shape-rendering="geometricPrecision"/>
<line x1="286" y1="624.5" x2="290.5" y2="613.5" stroke="#111" stroke-width="1.4" shape-rendering="geometricPrecision"/>
<path d="M295.7 623 L295.7 614.7 L303.5 614.7" fill="none" stroke="#111" stroke-width="1.8"/>
<rect x="296.5" y="615.5" width="7" height="7" fill="#fafafa"/>
</svg>
</body></html>
